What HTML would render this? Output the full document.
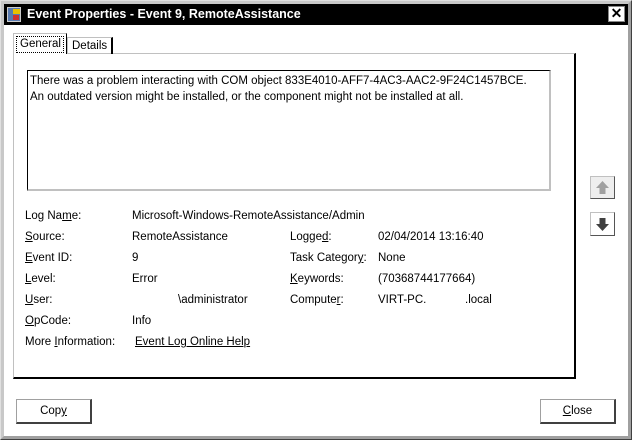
<!DOCTYPE html>
<html><head><style>
*{margin:0;padding:0;box-sizing:border-box}
body{width:632px;height:440px;background:#fff;font-family:"Liberation Sans",sans-serif;font-size:11.5px;color:#000;position:relative;overflow:hidden}
.a{position:absolute;white-space:nowrap}
.t{position:absolute;line-height:14px;white-space:nowrap}
u{text-decoration:underline}
.btn{position:absolute;background:#fff;border:1px solid #a0a0a0;border-right:2px solid #404040;border-bottom:2px solid #404040;text-align:center;line-height:23px}
</style></head><body>
<div class="a" style="left:0;top:0;width:632px;height:440px;border:4px solid #a0a0a0;border-left-color:#c8c8c8;border-top-color:#c8c8c8"></div>
<div class="a" style="left:0;top:0;width:632px;height:440px;border:1px solid #404040;border-left-color:#e0e0e0;border-top-color:#e0e0e0"></div>
<div class="a" style="left:4px;top:4px;width:624px;height:21px;background:#000"></div>
<div class="a" style="left:7px;top:7px;width:14px;height:15px;background:#5a7bb0;border:1px solid #ccc"></div>
<div class="a" style="left:13px;top:9px;width:7px;height:5px;background:#e8c000"></div>
<div class="a" style="left:13px;top:15px;width:6px;height:5px;background:#d03030"></div>
<div class="a" style="left:27px;top:6px;color:#fff;font-weight:bold;font-size:12.5px;line-height:16px">Event Properties - Event 9, RemoteAssistance</div>
<div class="a" style="left:608px;top:6px;width:17px;height:16px;background:#fff;border:1px solid #888;font-weight:bold;font-size:14px;line-height:13px;text-align:center">✕</div>
<div class="a" style="left:13px;top:53px;width:563px;height:326px;border:1px solid #c0c0c0;border-right:2px solid #000;border-bottom:2px solid #000"></div>
<div class="a" style="left:13px;top:33px;width:54px;height:21px;background:#fff;border:1px solid #c0c0c0;border-right:1px solid #000;border-bottom:none"></div>
<div class="a" style="left:16px;top:36px;width:48px;height:17px;border:1px dotted #000;line-height:15px;padding-left:3px">General</div>
<div class="a" style="left:67px;top:37px;width:46px;height:17px;border:1px solid #c0c0c0;border-right:2px solid #000;border-bottom:none;line-height:17px;padding-left:4px">Details</div>
<div class="a" style="left:27px;top:70px;width:524px;height:121px;border:1px solid #000;border-right:2px solid #c0c0c0;border-bottom:2px solid #c0c0c0"></div>
<div class="t" style="left:30px;top:74px">There was a problem interacting with COM object 833E4010-AFF7-4AC3-AAC2-9F24C1457BCE.</div>
<div class="t" style="left:30px;top:90px">An outdated version might be installed, or the component might not be installed at all.</div>
<div class="a" style="left:590px;top:176px;width:25px;height:23px;background:#eee;border:1px solid #c0c0c0;border-right:1px solid #555;border-bottom:1px solid #555"></div>
<svg class="a" style="left:594px;top:179px" width="17" height="17"><path d="M8.5 2 L15 9 L11.5 9 L11.5 15 L5.5 15 L5.5 9 L2 9 Z" fill="#a0a0a0"/></svg>
<div class="a" style="left:590px;top:212px;width:25px;height:24px;background:#fff;border:1px solid #c0c0c0;border-right:1px solid #555;border-bottom:1px solid #555"></div>
<svg class="a" style="left:594px;top:216px" width="17" height="17"><path d="M5.5 2 L11.5 2 L11.5 8 L15 8 L8.5 15 L2 8 L5.5 8 Z" fill="#404040"/></svg>
<div class="t" style="left:25px;top:209px">Log Na<u>m</u>e:</div>
<div class="t" style="left:132px;top:209px">Microsoft-Windows-RemoteAssistance/Admin</div>
<div class="t" style="left:25px;top:230px"><u>S</u>ource:</div>
<div class="t" style="left:132px;top:230px">RemoteAssistance</div>
<div class="t" style="left:290px;top:230px">Logge<u>d</u>:</div>
<div class="t" style="left:378px;top:230px">02/04/2014 13:16:40</div>
<div class="t" style="left:25px;top:251px"><u>E</u>vent ID:</div>
<div class="t" style="left:132px;top:251px">9</div>
<div class="t" style="left:290px;top:251px">Task Categor<u>y</u>:</div>
<div class="t" style="left:378px;top:251px">None</div>
<div class="t" style="left:25px;top:272px"><u>L</u>evel:</div>
<div class="t" style="left:132px;top:272px">Error</div>
<div class="t" style="left:290px;top:272px"><u>K</u>eywords:</div>
<div class="t" style="left:378px;top:272px">(70368744177664)</div>
<div class="t" style="left:25px;top:293px"><u>U</u>ser:</div>
<div class="t" style="left:178px;top:293px">\administrator</div>
<div class="t" style="left:290px;top:293px">Compute<u>r</u>:</div>
<div class="t" style="left:378px;top:293px">VIRT-PC.</div>
<div class="t" style="left:465px;top:293px">.local</div>
<div class="t" style="left:25px;top:314px"><u>O</u>pCode:</div>
<div class="t" style="left:132px;top:314px">Info</div>
<div class="t" style="left:25px;top:335px">More <u>I</u>nformation:</div>
<div class="t" style="left:135px;top:335px"><u>Event Log Online Help</u></div>
<div class="btn" style="left:16px;top:399px;width:76px;height:25px">Cop<u>y</u></div>
<div class="btn" style="left:540px;top:399px;width:76px;height:25px"><u>C</u>lose</div>
</body></html>
